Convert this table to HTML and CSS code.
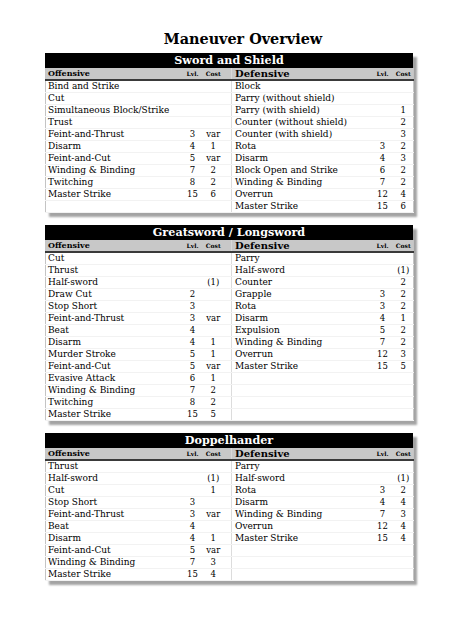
FILE: index.html
```html
<!DOCTYPE html>
<html>
<head>
<meta charset="utf-8">
<link rel="stylesheet" href="styles.css">
</head>
<body>
<h1 class="title">Maneuver Overview</h1>

<section class="card">
  <div class="bar">Sword and Shield</div>
  <table class="moves">
    <colgroup><col class="c-name1"><col class="c-lvl"><col class="c-cost1"><col class="c-name2"><col class="c-lvl"><col class="c-cost2"></colgroup>
    <thead><tr><th class="off">Offensive</th><th class="lvl">Lvl.</th><th class="cost">Cost</th><th class="def">Defensive</th><th class="lvl">Lvl.</th><th class="cost">Cost</th></tr></thead>
    <tbody>
      <tr><td>Bind and Strike</td><td></td><td></td><td class="r">Block</td><td></td><td></td></tr>
      <tr><td>Cut</td><td></td><td></td><td class="r">Parry (without shield)</td><td></td><td></td></tr>
      <tr><td>Simultaneous Block/Strike</td><td></td><td></td><td class="r">Parry (with shield)</td><td></td><td class="n">1</td></tr>
      <tr><td>Trust</td><td></td><td></td><td class="r">Counter (without shield)</td><td></td><td class="n">2</td></tr>
      <tr><td>Feint-and-Thrust</td><td class="n">3</td><td class="n">var</td><td class="r">Counter (with shield)</td><td></td><td class="n">3</td></tr>
      <tr><td>Disarm</td><td class="n">4</td><td class="n">1</td><td class="r">Rota</td><td class="n">3</td><td class="n">2</td></tr>
      <tr><td>Feint-and-Cut</td><td class="n">5</td><td class="n">var</td><td class="r">Disarm</td><td class="n">4</td><td class="n">3</td></tr>
      <tr><td>Winding &amp; Binding</td><td class="n">7</td><td class="n">2</td><td class="r">Block Open and Strike</td><td class="n">6</td><td class="n">2</td></tr>
      <tr><td>Twitching</td><td class="n">8</td><td class="n">2</td><td class="r">Winding &amp; Binding</td><td class="n">7</td><td class="n">2</td></tr>
      <tr><td>Master Strike</td><td class="n">15</td><td class="n">6</td><td class="r">Overrun</td><td class="n">12</td><td class="n">4</td></tr>
      <tr><td></td><td></td><td></td><td class="r">Master Strike</td><td class="n">15</td><td class="n">6</td></tr>
    </tbody>
  </table>
</section>

<section class="card">
  <div class="bar">Greatsword / Longsword</div>
  <table class="moves">
    <colgroup><col class="c-name1"><col class="c-lvl"><col class="c-cost1"><col class="c-name2"><col class="c-lvl"><col class="c-cost2"></colgroup>
    <thead><tr><th class="off">Offensive</th><th class="lvl">Lvl.</th><th class="cost">Cost</th><th class="def">Defensive</th><th class="lvl">Lvl.</th><th class="cost">Cost</th></tr></thead>
    <tbody>
      <tr><td>Cut</td><td></td><td></td><td class="r">Parry</td><td></td><td></td></tr>
      <tr><td>Thrust</td><td></td><td></td><td class="r">Half-sword</td><td></td><td class="n">(1)</td></tr>
      <tr><td>Half-sword</td><td></td><td class="n">(1)</td><td class="r">Counter</td><td></td><td class="n">2</td></tr>
      <tr><td>Draw Cut</td><td class="n">2</td><td></td><td class="r">Grapple</td><td class="n">3</td><td class="n">2</td></tr>
      <tr><td>Stop Short</td><td class="n">3</td><td></td><td class="r">Rota</td><td class="n">3</td><td class="n">2</td></tr>
      <tr><td>Feint-and-Thrust</td><td class="n">3</td><td class="n">var</td><td class="r">Disarm</td><td class="n">4</td><td class="n">1</td></tr>
      <tr><td>Beat</td><td class="n">4</td><td></td><td class="r">Expulsion</td><td class="n">5</td><td class="n">2</td></tr>
      <tr><td>Disarm</td><td class="n">4</td><td class="n">1</td><td class="r">Winding &amp; Binding</td><td class="n">7</td><td class="n">2</td></tr>
      <tr><td>Murder Stroke</td><td class="n">5</td><td class="n">1</td><td class="r">Overrun</td><td class="n">12</td><td class="n">3</td></tr>
      <tr><td>Feint-and-Cut</td><td class="n">5</td><td class="n">var</td><td class="r">Master Strike</td><td class="n">15</td><td class="n">5</td></tr>
      <tr><td>Evasive Attack</td><td class="n">6</td><td class="n">1</td><td class="r"></td><td></td><td></td></tr>
      <tr><td>Winding &amp; Binding</td><td class="n">7</td><td class="n">2</td><td class="r"></td><td></td><td></td></tr>
      <tr><td>Twitching</td><td class="n">8</td><td class="n">2</td><td class="r"></td><td></td><td></td></tr>
      <tr><td>Master Strike</td><td class="n">15</td><td class="n">5</td><td class="r"></td><td></td><td></td></tr>
    </tbody>
  </table>
</section>

<section class="card">
  <div class="bar">Doppelhander</div>
  <table class="moves">
    <colgroup><col class="c-name1"><col class="c-lvl"><col class="c-cost1"><col class="c-name2"><col class="c-lvl"><col class="c-cost2"></colgroup>
    <thead><tr><th class="off">Offensive</th><th class="lvl">Lvl.</th><th class="cost">Cost</th><th class="def">Defensive</th><th class="lvl">Lvl.</th><th class="cost">Cost</th></tr></thead>
    <tbody>
      <tr><td>Thrust</td><td></td><td></td><td class="r">Parry</td><td></td><td></td></tr>
      <tr><td>Half-sword</td><td></td><td class="n">(1)</td><td class="r">Half-sword</td><td></td><td class="n">(1)</td></tr>
      <tr><td>Cut</td><td></td><td class="n">1</td><td class="r">Rota</td><td class="n">3</td><td class="n">2</td></tr>
      <tr><td>Stop Short</td><td class="n">3</td><td></td><td class="r">Disarm</td><td class="n">4</td><td class="n">4</td></tr>
      <tr><td>Feint-and-Thrust</td><td class="n">3</td><td class="n">var</td><td class="r">Winding &amp; Binding</td><td class="n">7</td><td class="n">3</td></tr>
      <tr><td>Beat</td><td class="n">4</td><td></td><td class="r">Overrun</td><td class="n">12</td><td class="n">4</td></tr>
      <tr><td>Disarm</td><td class="n">4</td><td class="n">1</td><td class="r">Master Strike</td><td class="n">15</td><td class="n">4</td></tr>
      <tr><td>Feint-and-Cut</td><td class="n">5</td><td class="n">var</td><td class="r"></td><td></td><td></td></tr>
      <tr><td>Winding &amp; Binding</td><td class="n">7</td><td class="n">3</td><td class="r"></td><td></td><td></td></tr>
      <tr><td>Master Strike</td><td class="n">15</td><td class="n">4</td><td class="r"></td><td></td><td></td></tr>
    </tbody>
  </table>
</section>
</body>
</html>
```

FILE: styles.css
```css
body {
  margin: 0;
  background: #fff;
  color: #000;
  font-family: "DejaVu Serif", "Liberation Serif", serif;
}

.title {
  margin: 31px 0 6px;
  padding-left: 12px;
  text-align: center;
  font-size: 14.4px;
  line-height: 16px;
  font-weight: bold;
}

.card {
  width: 368px;
  margin: 0 0 12px 45px;
  box-shadow: 4px 4px 2px #a3a3a3;
  background: #fff;
}

.bar {
  height: 15px;
  line-height: 15px;
  background: #000;
  color: #fff;
  text-align: center;
  font-size: 11.2px;
  font-weight: bold;
}

.moves {
  width: 368px;
  border-collapse: collapse;
  table-layout: fixed;
  border: 1px solid #c4c4c4;
  border-top: none;
}

.c-name1 { width: 136px; }
.c-lvl { width: 22px; }
.c-cost1 { width: 28px; }
.c-name2 { width: 140px; }
.c-cost2 { width: 20px; }

.moves th {
  height: 11px;
  background: #c8c8c8;
  border-bottom: 2px solid #3a3a3a;
  padding: 0 2px;
  vertical-align: bottom;
  line-height: 11px;
  white-space: nowrap;
}

.moves th.off {
  text-align: left;
  font-size: 8px;
}

.moves th.def {
  text-align: left;
  font-size: 10px;
  padding-left: 3px;
  border-left: 1px solid #d8d8d8;
}

.moves th.lvl,
.moves th.cost {
  text-align: center;
  font-size: 6px;
  padding: 0;
}

.moves td {
  height: 11px;
  line-height: 11px;
  padding: 0 0 0 2px;
  border-bottom: 1px solid #f2f2f2;
  font-size: 9px;
  white-space: nowrap;
  overflow: hidden;
}

.moves td.r {
  padding-left: 3px;
  border-left: 1px solid #dcdcdc;
}

.moves td.n {
  text-align: center;
  padding: 0;
  font-size: 8.5px;
}

.moves td:nth-child(3),
.moves th:nth-child(3) {
  padding-right: 8px;
}
```
